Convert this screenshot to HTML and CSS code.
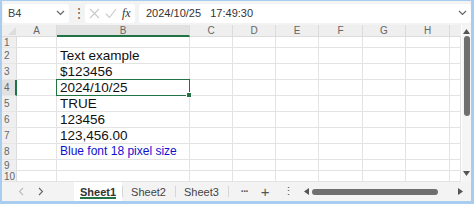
FILE: index.html
```html
<!DOCTYPE html>
<html lang="en">
<head>
    <meta charset="UTF-8">
    <title>Sheet</title>
    <link rel="stylesheet" href="styles.css">
</head>
<body>
    <div class="app">
        <div class="toolbar">
            <div class="name-box">
                <span>B4</span>
                <svg class="chev" width="9" height="6" viewBox="0 0 9 6"><path d="M1 1l3.5 3.5L8 1" fill="none" stroke="#666" stroke-width="1.2"/></svg>
            </div>
            <div class="dots">&#8942;</div>
            <div class="fx-box">
                <svg width="11" height="11" viewBox="0 0 11 11"><path d="M1 1l9 9M10 1l-9 9" stroke="#c8c8c8" stroke-width="1.1"/></svg>
                <svg width="12" height="11" viewBox="0 0 12 11"><path d="M1 6l3.5 3.5L11 1" fill="none" stroke="#c8c8c8" stroke-width="1.1"/></svg>
                <span class="fx">fx</span>
            </div>
            <div class="formula">
                <span>2024/10/25&nbsp;&nbsp;&nbsp;17:49:30</span>
                <svg class="chev" width="9" height="6" viewBox="0 0 9 6"><path d="M1 1l3.5 3.5L8 1" fill="none" stroke="#666" stroke-width="1.2"/></svg>
            </div>
        </div>

        <div class="sheet">
            <div class="grid">
                <div class="corner"><svg width="8" height="8" viewBox="0 0 8 8"><path d="M8 0V8H0z" fill="#ddd"/></svg></div>
                <div class="col-head">A</div>
                <div class="col-head active">B</div>
                <div class="col-head">C</div>
                <div class="col-head">D</div>
                <div class="col-head">E</div>
                <div class="col-head">F</div>
                <div class="col-head">G</div>
                <div class="col-head">H</div>
                <div class="col-head last"></div>

                <div class="row-head">1</div><div class="cell"></div><div class="cell"></div><div class="cell"></div><div class="cell"></div><div class="cell"></div><div class="cell"></div><div class="cell"></div><div class="cell"></div><div class="cell"></div>
                <div class="row-head">2</div><div class="cell"></div><div class="cell text">Text example</div><div class="cell"></div><div class="cell"></div><div class="cell"></div><div class="cell"></div><div class="cell"></div><div class="cell"></div><div class="cell"></div>
                <div class="row-head">3</div><div class="cell"></div><div class="cell text">$123456</div><div class="cell"></div><div class="cell"></div><div class="cell"></div><div class="cell"></div><div class="cell"></div><div class="cell"></div><div class="cell"></div>
                <div class="row-head active">4</div><div class="cell"></div><div class="cell text selected">2024/10/25<span class="handle"></span></div><div class="cell"></div><div class="cell"></div><div class="cell"></div><div class="cell"></div><div class="cell"></div><div class="cell"></div><div class="cell"></div>
                <div class="row-head">5</div><div class="cell"></div><div class="cell text">TRUE</div><div class="cell"></div><div class="cell"></div><div class="cell"></div><div class="cell"></div><div class="cell"></div><div class="cell"></div><div class="cell"></div>
                <div class="row-head">6</div><div class="cell"></div><div class="cell text">123456</div><div class="cell"></div><div class="cell"></div><div class="cell"></div><div class="cell"></div><div class="cell"></div><div class="cell"></div><div class="cell"></div>
                <div class="row-head">7</div><div class="cell"></div><div class="cell text">123,456.00</div><div class="cell"></div><div class="cell"></div><div class="cell"></div><div class="cell"></div><div class="cell"></div><div class="cell"></div><div class="cell"></div>
                <div class="row-head">8</div><div class="cell"></div><div class="cell text blue">Blue font 18 pixel size</div><div class="cell"></div><div class="cell"></div><div class="cell"></div><div class="cell"></div><div class="cell"></div><div class="cell"></div><div class="cell"></div>
                <div class="row-head">9</div><div class="cell"></div><div class="cell"></div><div class="cell"></div><div class="cell"></div><div class="cell"></div><div class="cell"></div><div class="cell"></div><div class="cell"></div><div class="cell"></div>
                <div class="row-head">10</div><div class="cell"></div><div class="cell"></div><div class="cell"></div><div class="cell"></div><div class="cell"></div><div class="cell"></div><div class="cell"></div><div class="cell"></div><div class="cell"></div>
            </div>
            <div class="vscroll">
                <svg width="7" height="5" viewBox="0 0 7 5"><path d="M3.5 0L7 5H0z" fill="#555"/></svg>
                <div class="vthumb"></div>
                <div class="vspace"></div>
                <svg width="7" height="5" viewBox="0 0 7 5"><path d="M0 0H7L3.5 5z" fill="#555"/></svg>
            </div>
        </div>

        <div class="bottom">
            <div class="nav">
                <svg width="6" height="9" viewBox="0 0 6 9"><path d="M5 1L1.5 4.5 5 8" fill="none" stroke="#bbb" stroke-width="1.1"/></svg>
                <svg width="6" height="9" viewBox="0 0 6 9"><path d="M1 1l3.5 3.5L1 8" fill="none" stroke="#666" stroke-width="1.1"/></svg>
            </div>
            <div class="tab current">Sheet1</div>
            <div class="tab">Sheet2</div>
            <div class="tab">Sheet3</div>
            <div class="tab-tools">
                <span class="more">&middot;&middot;&middot;</span>
                <span class="plus">+</span>
                <span class="kebab">&#8942;</span>
            </div>
            <div class="hscroll">
                <svg width="5" height="7" viewBox="0 0 5 7"><path d="M5 0V7L0 3.5z" fill="#555"/></svg>
                <div class="hthumb"></div>
                <svg width="5" height="7" viewBox="0 0 5 7"><path d="M0 0L5 3.5 0 7z" fill="#555"/></svg>
            </div>
        </div>
    </div>
</body>
</html>
```

FILE: styles.css
```css
body {
    margin: 0;
    background-color: #a9cdee;
    font-family: "Liberation Sans", Arial, sans-serif;
    width: 474px;
    height: 204px;
    overflow: hidden;
}
.app {
    margin: 1px 3px 0 2px;
    height: 200px;
    background-color: #f3f3f3;
    display: flex;
    flex-direction: column;
}
.toolbar {
    height: 24px;
    display: flex;
    align-items: center;
    gap: 4px;
    padding: 0 0 0 1px;
    font-size: 11px;
    color: #444;
}
.name-box {
    width: 57px;
    height: 19px;
    background-color: #ffffff;
    border-radius: 3px;
    display: flex;
    align-items: center;
    justify-content: space-between;
    padding: 0 4px 0 5px;
}
.dots {
    width: 8px;
    text-align: center;
    font-size: 12px;
    color: #555;
}
.fx-box {
    width: 46px;
    height: 19px;
    background-color: #ffffff;
    border-radius: 3px;
    display: flex;
    align-items: center;
    gap: 5px;
    padding-left: 4px;
}
.fx {
    font-family: "Liberation Serif", serif;
    font-style: italic;
    font-size: 12px;
    color: #333;
}
.formula {
    flex: 1;
    height: 19px;
    background-color: #ffffff;
    border-radius: 3px;
    display: flex;
    align-items: center;
    justify-content: space-between;
    padding: 0 4px 0 7px;
    font-size: 11px;
    color: #333;
}
.sheet {
    display: flex;
    height: 157px;
    background-color: #ffffff;
}
.grid {
    flex: 1;
    display: grid;
    grid-template-columns: 15px 40px 133px 43px 43px 43px 44px 43px 44px 11px;
    grid-template-rows: 12px 11px repeat(7, 16px) 11px 11px;
    overflow: hidden;
}
.corner, .col-head, .row-head {
    background-color: #efefef;
    color: #666;
    font-size: 10px;
}
.corner {
    display: flex;
    align-items: flex-end;
    justify-content: flex-end;
    padding: 0 1px 1px 0;
    border-bottom: 1px solid #dcdcdc;
}
.col-head {
    display: flex;
    align-items: center;
    justify-content: center;
    border-right: 1px solid #dcdcdc;
    border-bottom: 1px solid #dcdcdc;
}
.col-head.active {
    background-color: #e1e1e1;
    border-bottom: 2px solid #217346;
}
.col-head.last {
    border-right: none;
}
.row-head {
    display: flex;
    align-items: center;
    padding-left: 2px;
    font-size: 10px;
    border-right: 1px solid #dcdcdc;
    border-bottom: 1px solid #e6e6e6;
}
.row-head.active {
    background-color: #e1e1e1;
    border-right: 2px solid #217346;
}
.cell {
    border-right: 1px solid #e3e3e3;
    border-bottom: 1px solid #e3e3e3;
    min-width: 0;
}
.text {
    font-size: 13.5px;
    color: #111;
    padding: 0 0 0 3px;
    display: flex;
    align-items: flex-end;
    line-height: 15px;
    white-space: nowrap;
}
.blue {
    color: #1010d0;
    font-size: 12px;
}
.selected {
    position: relative;
    border: 1.5px solid #217346;
    margin: -1px 0 0 -1px;
    padding-left: 3px;
}
.handle {
    position: absolute;
    right: -3px;
    bottom: -3px;
    width: 4px;
    height: 4px;
    background-color: #217346;
    border: 1px solid #ffffff;
}
.vscroll {
    width: 9px;
    background-color: #f5f5f5;
    display: flex;
    flex-direction: column;
    align-items: center;
    padding-top: 4px;
    padding-bottom: 6px;
    gap: 2px;
}
.vthumb {
    width: 6px;
    height: 80px;
    background-color: #6f6f6f;
    border-radius: 3px;
}
.vspace {
    flex: 1;
}
.bottom {
    height: 19px;
    display: flex;
    align-items: stretch;
    font-size: 11px;
    color: #444;
}
.nav {
    width: 72px;
    display: flex;
    align-items: center;
    gap: 14px;
    padding-left: 16px;
    box-sizing: border-box;
}
.tab {
    display: flex;
    align-items: center;
    padding: 0 9px;
    position: relative;
}
.tab + .tab::before {
    content: "";
    position: absolute;
    left: 0;
    top: 4px;
    bottom: 4px;
    border-left: 1px solid #d6d6d6;
}
.tab.current {
    background-color: #ffffff;
    font-weight: bold;
    color: #333;
    padding: 0 6px;
}
.tab.current::after {
    content: "";
    position: absolute;
    left: 6px;
    right: 6px;
    bottom: 2px;
    border-bottom: 2px solid #217346;
}
.tab-tools {
    display: flex;
    align-items: center;
    gap: 13px;
    padding-left: 13px;
    color: #555;
    position: relative;
}
.tab-tools::before {
    content: "";
    position: absolute;
    left: 0;
    top: 4px;
    bottom: 4px;
    border-left: 1px solid #d6d6d6;
}
.more {
    font-size: 10px;
    font-weight: bold;
    letter-spacing: -1px;
}
.plus {
    font-size: 15px;
}
.kebab {
    font-size: 11px;
}
.hscroll {
    flex: 1;
    display: flex;
    align-items: center;
    gap: 3px;
    padding: 0 8px 0 10px;
}
.hthumb {
    width: 126px;
    height: 6px;
    background-color: #6f6f6f;
    border-radius: 3px;
    margin-right: auto;
}
```
